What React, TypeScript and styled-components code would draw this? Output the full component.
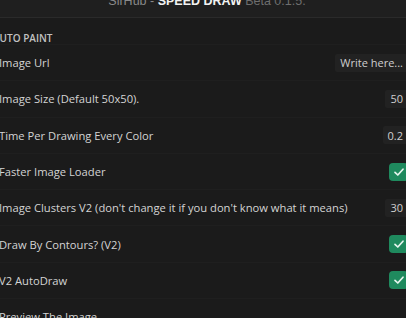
import React from "react";
import styled, { createGlobalStyle } from "styled-components";

const Global = createGlobalStyle`
  html, body { margin: 0; padding: 0; background: #1b1b1b; overflow: hidden; }
  body { font-family: "Open Sans", "Noto Sans", sans-serif; }
`;

const Window = styled.div`
  width: 412px;
  margin-left: -1px;
  height: 318px;
  overflow: hidden;
  background: #1b1b1b;
  display: flex;
  flex-direction: column;
`;

const Header = styled.div`
  flex-shrink: 0;
  height: 17px;
  background: #1f1f1f;
  border-bottom: 1px solid #2a2a2a;
  display: flex;
  align-items: flex-end;
  justify-content: center;
  overflow: hidden;
  font-family: "Liberation Sans", sans-serif;
  font-size: 12.5px;
  line-height: 13px;
`;

const Title = styled.div`
  margin-bottom: 9px;
  color: #8a8a8a;
  white-space: nowrap;
  padding-left: 4px;
  b { color: #f2f2f2; font-weight: 700; }
  span { color: #6e6e6e; }
`;

const Section = styled.div`
  flex-shrink: 0;
  margin-left: -6px;
  padding-top: 14px;
  height: 26px;
  box-sizing: border-box;
  font-size: 10px;
  font-weight: 600;
  color: #c2c2c2;
  line-height: 12px;
`;

const Row = styled.div`
  flex-shrink: 0;
  height: 36.3px;
  display: flex;
  align-items: center;
  justify-content: space-between;
  border-top: 1px solid #1f1f1f;
  box-sizing: border-box;
`;

const Label = styled.div`
  font-size: 11.2px;
  color: #d4d4d4;
  white-space: nowrap;
`;

const Value = styled.div`
  height: 18px;
  padding: 0 5px;
  background: #222222;
  border-radius: 2px;
  color: #cfcfcf;
  font-size: 11px;
  display: flex;
  align-items: center;
  justify-content: flex-end;
  margin-right: 3px;
`;

const Check = styled.div`
  width: 19px;
  height: 18px;
  border-radius: 4px;
  background: #1f8a5e;
  display: flex;
  align-items: center;
  justify-content: center;
  margin-right: 3px;
`;

const CheckIcon = () => (
  <svg width="12" height="12" viewBox="0 0 12 12">
    <path d="M2 6.3 L4.8 9 L10 3.2" stroke="#e6f5ee" strokeWidth="1.7" fill="none" strokeLinecap="round" strokeLinejoin="round" />
  </svg>
);

type Item = { label: string; value?: string; check?: boolean };

const items: Item[] = [
  { label: "Image Url", value: "Write here..." },
  { label: "Image Size (Default 50x50).", value: "50" },
  { label: "Time Per Drawing Every Color", value: "0.2" },
  { label: "Faster Image Loader", check: true },
  { label: "Image Clusters V2 (don't change it if you don't know what it means)", value: "30" },
  { label: "Draw By Contours? (V2)", check: true },
  { label: "V2 AutoDraw", check: true },
  { label: "Preview The Image" },
];

export default function App() {
  return (
    <>
      <Global />
      <Window>
        <Header>
          <Title>
            SirHub - <b>SPEED DRAW</b> <span>Beta 0.1.5.</span>
          </Title>
        </Header>
        <Section>AUTO PAINT</Section>
        {items.map((it) => (
          <Row key={it.label}>
            <Label>{it.label}</Label>
            {it.value && <Value>{it.value}</Value>}
            {it.check && (
              <Check>
                <CheckIcon />
              </Check>
            )}
          </Row>
        ))}
      </Window>
    </>
  );
}
